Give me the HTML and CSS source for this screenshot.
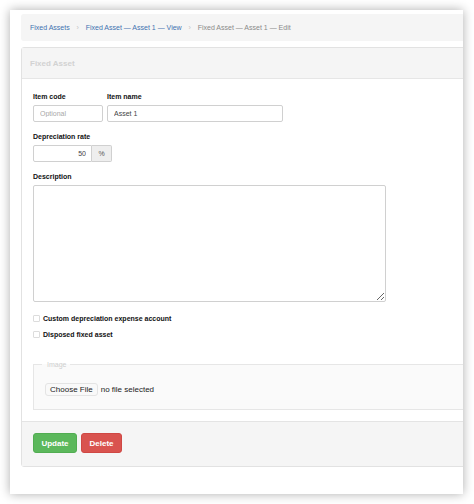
FILE: index.html
```html
<!DOCTYPE html>
<html>
<head>
<meta charset="utf-8">
<link rel="stylesheet" href="styles.css">
</head>
<body>
<div class="window">
  <div class="breadcrumb">
    <a class="crumb link">Fixed Assets</a>
    <span class="sep">›</span>
    <a class="crumb link">Fixed Asset — Asset 1 — View</a>
    <span class="sep">›</span>
    <span class="crumb active">Fixed Asset — Asset 1 — Edit</span>
  </div>
  <div class="panel">
    <div class="panel-heading">Fixed Asset</div>
    <div class="panel-body">
      <div class="row">
        <div class="group code">
          <label class="label">Item code</label>
          <input class="input" type="text" placeholder="Optional">
        </div>
        <div class="group name">
          <label class="label">Item name</label>
          <input class="input" type="text" value="Asset 1">
        </div>
      </div>
      <div class="group">
        <label class="label">Depreciation rate</label>
        <div class="input-group">
          <input class="input rate" type="text" value="50">
          <span class="addon">%</span>
        </div>
      </div>
      <div class="group">
        <label class="label">Description</label>
        <textarea class="textarea"></textarea>
      </div>
      <div class="checks">
        <label class="check"><input type="checkbox" class="box"><span>Custom depreciation expense account</span></label>
        <label class="check"><input type="checkbox" class="box"><span>Disposed fixed asset</span></label>
      </div>
      <fieldset class="fieldset">
        <legend class="legend">Image</legend>
        <div class="file">
          <span class="file-btn">Choose File</span>
          <span class="file-text">no file selected</span>
        </div>
      </fieldset>
    </div>
    <div class="panel-footer">
      <button class="btn success">Update</button>
      <button class="btn danger">Delete</button>
    </div>
  </div>
</div>
</body>
</html>
```

FILE: styles.css
```css
* { box-sizing: border-box; }
html, body { margin: 0; padding: 0; background: #ffffff; }
body {
  font-family: "Liberation Sans", Arial, sans-serif;
  color: #333333;
  width: 474px;
  height: 504px;
  overflow: hidden;
}
.window {
  margin: 10px 0 0 10px;
  width: 453px;
  height: 484px;
  background: #ffffff;
  box-shadow: 0 0 10px rgba(0, 0, 0, 0.32);
  overflow: hidden;
  padding: 4px 0 0 11px;
}
.breadcrumb {
  width: 470px;
  height: 27px;
  background: #f5f5f5;
  border-radius: 3px;
  display: flex;
  align-items: center;
  padding: 0 9px;
  font-size: 7px;
  white-space: nowrap;
}
.crumb { text-decoration: none; }
.link { color: #3f72b0; }
.active { color: #8a8a8a; }
.sep {
  color: #c4c4c4;
  width: 16px;
  text-align: center;
  font-size: 7px;
}
.panel {
  margin-top: 6px;
  width: 470px;
  border: 1px solid #e2e2e2;
  border-radius: 3px;
  background: #ffffff;
}
.panel-heading {
  height: 31px;
  background: #f5f5f5;
  border-bottom: 1px solid #e6e6e6;
  padding: 0 8px;
  display: flex;
  align-items: center;
  font-size: 8px;
  font-weight: bold;
  color: #d2d2d2;
}
.panel-body {
  padding: 13px 0 11px 11px;
}
.row { display: flex; gap: 4px; }
.group { display: flex; flex-direction: column; margin-bottom: 10px; }
.code { width: 70px; }
.name { width: 176px; }
.label {
  font-size: 7px;
  font-weight: bold;
  color: #111;
  line-height: 10px;
  margin-bottom: 3px;
}
.input {
  height: 17px;
  border: 1px solid #d0d0d0;
  border-radius: 2px;
  padding: 0 6px;
  font-family: "Liberation Sans", Arial, sans-serif;
  font-size: 7px;
  color: #444;
  background: #fff;
  outline: none;
  width: 100%;
}
.input::placeholder { color: #a8a8a8; }
.input-group { display: flex; width: 79px; }
.rate {
  width: 59px;
  text-align: right;
  border-radius: 2px 0 0 2px;
  padding-right: 5px;
}
.addon {
  width: 20px;
  height: 17px;
  background: #eeeeee;
  border: 1px solid #d0d0d0;
  border-left: none;
  border-radius: 0 2px 2px 0;
  font-size: 7px;
  color: #555;
  display: flex;
  align-items: center;
  justify-content: center;
}
.textarea {
  width: 353px;
  height: 117px;
  border: 1px solid #d0d0d0;
  border-radius: 2px;
  resize: both;
  outline: none;
  margin: 0;
}
.checks { margin-top: -2px; display: flex; flex-direction: column; }
.check {
  display: flex;
  align-items: center;
  height: 16px;
  font-size: 7px;
  font-weight: bold;
  color: #111;
}
.box {
  appearance: none;
  -webkit-appearance: none;
  width: 7px;
  height: 7px;
  margin: 0 3px 0 0;
  border: 1px solid #dcdcdc;
  border-radius: 1px;
  background: #fff;
}
.fieldset {
  margin: 19px 0 0 0;
  border: 1px solid #e6e6e6;
  border-right: none;
  background: #fafafa;
  padding: 15px 0 13px 11px;
  min-width: 0;
}
.legend {
  font-size: 7px;
  color: #cfcfcf;
  padding: 0 4px 0 5px;
  margin-left: -3px;
}
.file { display: flex; align-items: center; gap: 3px; }
.file-btn {
  height: 13px;
  padding: 0 4px;
  display: flex;
  align-items: center;
  font-size: 8px;
  color: #222;
  background: #f9f9f9;
  border: 1px solid #e4e4e4;
  border-radius: 3px;
}
.file-text { font-size: 8px; color: #222; }
.panel-footer {
  height: 45px;
  background: #f5f5f5;
  border-top: 1px solid #e4e4e4;
  padding: 11px 0 0 11px;
  display: flex;
  align-items: flex-start;
  gap: 4px;
}
.btn {
  height: 20px;
  border-radius: 3px;
  border: 1px solid transparent;
  font-family: "Liberation Sans", Arial, sans-serif;
  font-size: 8px;
  font-weight: bold;
  color: #fff;
  padding: 0 7px;
  cursor: pointer;
}
.success { background: #5cb85c; border-color: #52ad52; width: 44px; }
.danger { background: #d9534f; border-color: #cf4844; width: 41px; }
```
